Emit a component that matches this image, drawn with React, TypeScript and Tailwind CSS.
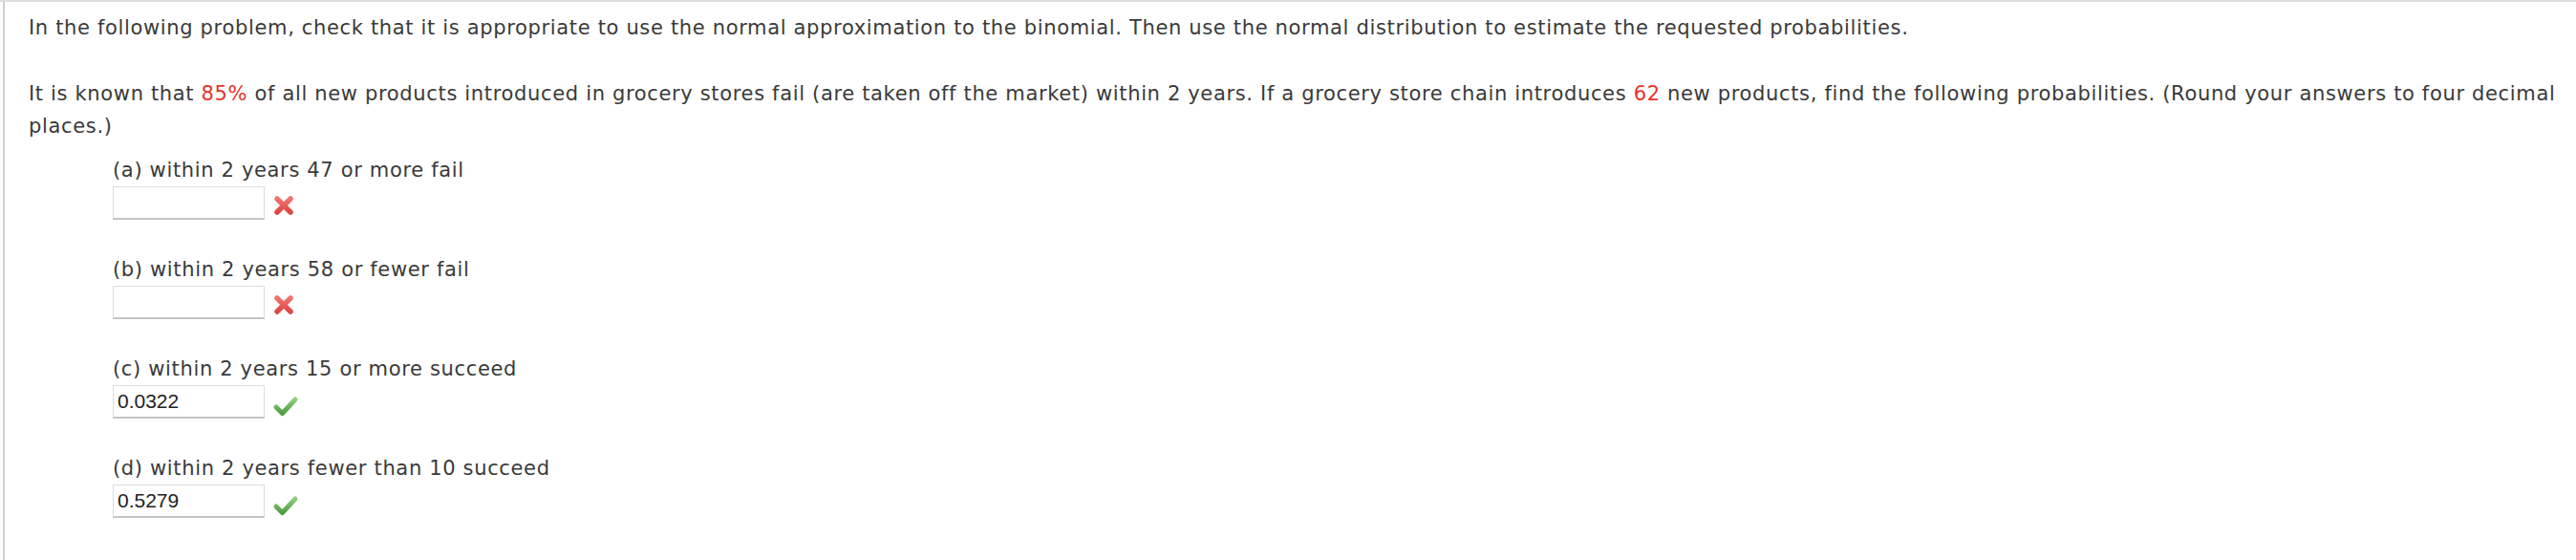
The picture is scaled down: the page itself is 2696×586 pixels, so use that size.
import React from 'react';

const CrossIcon = () => (
  <svg width="24" height="24" viewBox="0 0 24 24" className="shrink-0">
    <defs>
      <linearGradient id="xg" x1="0" y1="0" x2="0" y2="1">
        <stop offset="0" stopColor="#f07470" />
        <stop offset="1" stopColor="#dc4744" />
      </linearGradient>
    </defs>
    <path d="M5 5 L19 19 M19 5 L5 19" stroke="url(#xg)" strokeWidth="5.5" strokeLinecap="round" />
  </svg>
);

const CheckIcon = () => (
  <svg width="28" height="24" viewBox="0 0 28 24" className="shrink-0">
    <defs>
      <linearGradient id="cg" x1="0" y1="0" x2="0" y2="1">
        <stop offset="0" stopColor="#8fce7c" />
        <stop offset="1" stopColor="#4e9d45" />
      </linearGradient>
    </defs>
    <path d="M4 13 L10.5 19.5 L24 5" fill="none" stroke="url(#cg)" strokeWidth="5" strokeLinecap="round" strokeLinejoin="round" />
  </svg>
);

const parts = [
  { id: 'a', label: '(a) within 2 years 47 or more fail', value: '', ok: false },
  { id: 'b', label: '(b) within 2 years 58 or fewer fail', value: '', ok: false },
  { id: 'c', label: '(c) within 2 years 15 or more succeed', value: '0.0322', ok: true },
  { id: 'd', label: '(d) within 2 years fewer than 10 succeed', value: '0.5279', ok: true },
];

export default function App() {
  return (
    <div className="h-[586px] bg-white border-t-2 border-[#dedede] overflow-hidden">
      <div
        className="h-full ml-[3px] border-l-2 border-[#d0d0d0] pl-[25px] pt-[10px] text-[21px] leading-[34px] tracking-[0.66px] text-[#3a3a3a]"
        style={{ fontFamily: '"DejaVu Sans", Verdana, sans-serif' }}
      >
        <p>
          In the following problem, check that it is appropriate to use the normal approximation to the binomial. Then use the normal distribution to estimate the requested probabilities.
        </p>
        <p className="mt-[35px]">
          It is known that <span className="text-[#e8332b]">85%</span> of all new products introduced in grocery stores fail (are taken off the market) within 2 years. If a grocery store chain introduces <span className="text-[#e8332b]">62</span> new products, find the following probabilities. (Round your answers to four decimal places.)
        </p>
        <div className="mt-[12px] pl-[88px] flex flex-col gap-[35px]">
          {parts.map((p) => (
            <div key={p.id} className="flex flex-col">
              <div>{p.label}</div>
              <div className="flex items-center gap-[8px]">
                <div
                  className="w-[159px] h-[35px] border border-[#dcdcdc] border-b-2 border-b-[#c4c4c4] bg-white px-[4px] flex items-center text-[21px] tracking-normal text-[#222]"
                  style={{ fontFamily: '"Liberation Sans", Arial, sans-serif' }}
                >
                  {p.value}
                </div>
                <div className={p.ok ? 'mt-[8px]' : 'mt-[4px]'}>{p.ok ? <CheckIcon /> : <CrossIcon />}</div>
              </div>
            </div>
          ))}
        </div>
      </div>
    </div>
  );
}
